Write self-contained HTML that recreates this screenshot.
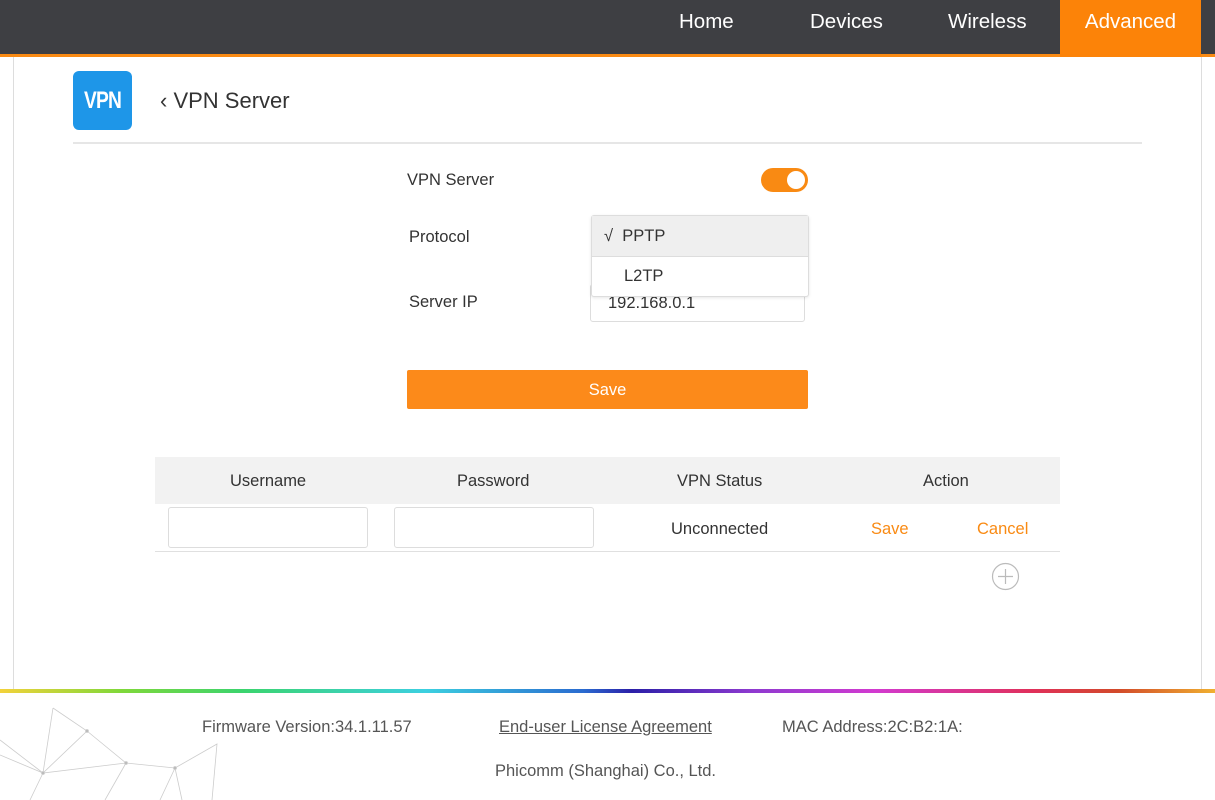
<!DOCTYPE html>
<html><head><meta charset="utf-8"><style>
*{margin:0;padding:0;box-sizing:border-box}
body{width:1215px;height:800px;overflow:hidden;background:#fff;font-family:"Liberation Sans",Arial,sans-serif;color:#333;position:relative}
.hdr{position:absolute;left:0;top:0;width:1215px;height:54px;background:#3e3f43}
.ol{position:absolute;left:0;top:54px;width:1215px;height:3px;background:#f98a13}
.nav{position:absolute;top:0;height:43px;line-height:43px;color:#fff;font-size:20.5px}
.adv{position:absolute;left:1060px;top:0;width:141px;height:57px;background:#fc8308;color:#fff;font-size:20.5px;text-align:center;line-height:43px}
.panel{position:absolute;left:13px;top:57px;width:1189px;height:632px;border-left:1px solid #ddd;border-right:1px solid #ddd}
.t{position:absolute;font-size:16.5px;color:#333}
.inp{position:absolute;background:#fff;border:1px solid #ddd;border-radius:3px}
.rain{position:absolute;left:0;top:689px;width:1215px;height:4px;background:linear-gradient(90deg,#f3d23a 0%,#7fd83a 10%,#3bd46e 20%,#3cd0e0 35%,#2a6bd0 48%,#2b1fa8 52%,#8f3ad0 62%,#d23ad0 72%,#e0305a 85%,#d24a2a 92%,#f0b030 100%)}
.f{position:absolute;font-size:16.5px;color:#555}
</style></head><body>
<div class="hdr"></div><div class="ol"></div>
<div class="nav" style="left:679px">Home</div>
<div class="nav" style="left:810px">Devices</div>
<div class="nav" style="left:948px">Wireless</div>
<div class="adv">Advanced</div>
<div class="panel"></div>
<div style="position:absolute;left:73px;top:71px;width:59px;height:59px;background:#1e96e8;border-radius:6px"><div style="position:absolute;left:0;top:0;width:59px;height:59px;color:#fff;font-weight:bold;font-size:24px;text-align:center;line-height:59px;letter-spacing:-1px;transform:scaleX(0.8)">VPN</div></div>
<div class="t" style="left:160px;top:88px;font-size:22px">‹&nbsp;VPN Server</div>
<div style="position:absolute;left:73px;top:142px;width:1069px;height:2px;background:#e6e6e6"></div>
<div class="t" style="left:407px;top:171px">VPN Server</div>
<div style="position:absolute;left:761px;top:168px;width:47px;height:24px;border-radius:12px;background:#f98a13"><div style="position:absolute;right:3px;top:3px;width:18px;height:18px;border-radius:50%;background:#fff"></div></div>
<div class="t" style="left:409px;top:228px">Protocol</div>
<div class="t" style="left:409px;top:293px">Server IP</div>
<div class="inp" style="left:590px;top:284px;width:215px;height:38px"></div>
<div class="t" style="left:608px;top:294px">192.168.0.1</div>
<div style="position:absolute;left:591px;top:215px;width:218px;height:82px;border:1px solid #ddd;border-radius:3px;background:#fff;box-shadow:0 1px 3px rgba(0,0,0,.1)">
<div style="height:41px;background:#efefef;border-bottom:1px solid #ddd;line-height:40px;font-size:16.5px;padding-left:12px">√&nbsp;&nbsp;PPTP</div>
<div style="line-height:38px;font-size:16.5px;padding-left:32px">L2TP</div></div>
<div style="position:absolute;left:407px;top:370px;width:401px;height:39px;background:#fc8a1a;border-radius:2px;color:#fff;font-size:16.5px;text-align:center;line-height:41px">Save</div>
<div style="position:absolute;left:155px;top:457px;width:905px;height:47px;background:#f2f2f2"></div>
<div class="t" style="left:230px;top:472px">Username</div>
<div class="t" style="left:457px;top:472px">Password</div>
<div class="t" style="left:677px;top:472px">VPN Status</div>
<div class="t" style="left:923px;top:472px">Action</div>
<div class="inp" style="left:168px;top:507px;width:200px;height:41px"></div>
<div class="inp" style="left:394px;top:507px;width:200px;height:41px"></div>
<div class="t" style="left:671px;top:520px">Unconnected</div>
<div class="t" style="left:871px;top:520px;color:#f98a13">Save</div>
<div class="t" style="left:977px;top:520px;color:#f98a13">Cancel</div>
<div style="position:absolute;left:155px;top:551px;width:905px;height:1px;background:#e0e0e0"></div>
<svg style="position:absolute;left:991px;top:562px" width="29" height="29"><circle cx="14.5" cy="14.5" r="13" fill="none" stroke="#bbb" stroke-width="1.2"/><path d="M14.5 7v15M7 14.5h15" stroke="#bbb" stroke-width="1.2"/></svg>
<div class="rain"></div>
<svg style="position:absolute;left:0;top:700px" width="230" height="100"><g stroke="#ccc" stroke-width="0.8" fill="#bbb"><path d="M53 8 L87 31 L43 73 L0 55 M53 8 L43 73 L126 63 L175 68 L217 44 L212 100 M87 31 L126 63 M43 73 L0 40 M126 63 L105 100 M175 68 L160 100 M175 68 L182 100 M43 73 L30 100" fill="none"/><circle cx="87" cy="31" r="1.5"/><circle cx="43" cy="73" r="1.5"/><circle cx="126" cy="63" r="1.5"/><circle cx="175" cy="68" r="1.5"/></g></svg>
<div class="f" style="left:202px;top:718px">Firmware Version:34.1.11.57</div>
<div class="f" style="left:499px;top:718px;text-decoration:underline">End-user License Agreement</div>
<div class="f" style="left:782px;top:718px">MAC Address:2C:B2:1A:</div>
<div class="f" style="left:495px;top:762px">Phicomm (Shanghai) Co., Ltd.</div>
</body></html>
